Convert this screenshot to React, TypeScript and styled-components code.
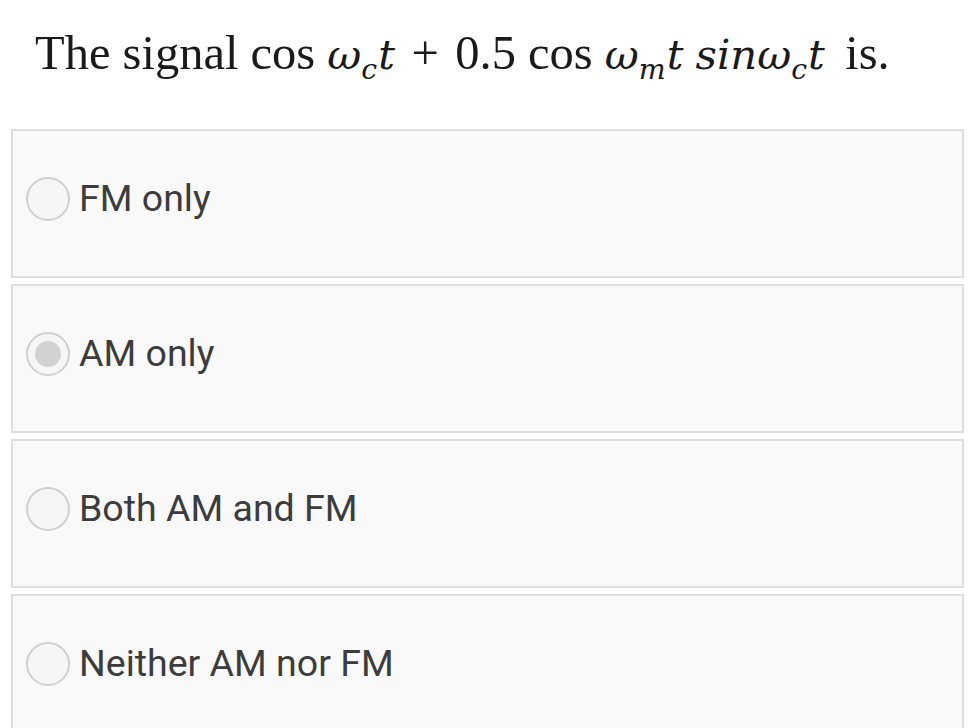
import React from "react";
import styled, { createGlobalStyle } from "styled-components";

const Global = createGlobalStyle`
  html, body { margin: 0; padding: 0; background: #ffffff; }
  body { font-family: "Roboto", "Liberation Sans", sans-serif; }
`;

const Page = styled.div`
  width: 971px;
  height: 728px;
  overflow: hidden;
  position: relative;
  background: #fff;
`;

const Question = styled.h1`
  margin: 0;
  padding: 24px 0 0 35px;
  height: 129px;
  box-sizing: border-box;
  font-family: "Liberation Serif", "Times New Roman", serif;
  font-weight: 400;
  font-size: 48.5px;
  line-height: 58px;
  color: #1a1a1a;
  white-space: nowrap;
`;

const MathVar = styled.i`
  font-family: "DejaVu Serif", "Liberation Serif", serif;
  font-style: italic;
  font-size: 0.86em;
`;

const MathOp = styled.span`
  margin: 0 0.34em;
`;

const Tail = styled.span`
  margin-left: 0.42em;
`;

const Sub = styled.sub`
  font-size: 0.68em;
  vertical-align: -0.3em;
  line-height: 0;
  margin-right: 0.03em;
`;

const Options = styled.div`
  display: flex;
  flex-direction: column;
  gap: 6px;
  padding: 0 7px 0 11px;
`;

const OptionBox = styled.label`
  display: flex;
  align-items: center;
  gap: 9px;
  height: 149px;
  box-sizing: border-box;
  padding: 0 0 10px 13px;
  border: 2px solid #dedede;
  background: #f9f9f9;
`;

const Radio = styled.span<{ $checked?: boolean }>`
  width: 44px;
  height: 44px;
  box-sizing: border-box;
  border-radius: 50%;
  border: 2px solid #cfcfcf;
  background: #f6f6f6;
  display: flex;
  align-items: center;
  justify-content: center;
  flex: none;
  &::after {
    content: "";
    display: ${(p) => (p.$checked ? "block" : "none")};
    width: 26px;
    height: 26px;
    border-radius: 50%;
    background: #d2d2d2;
  }
`;

const OptionText = styled.span`
  font-family: "Roboto", "Liberation Sans", sans-serif;
  font-size: 37.5px;
  color: #3c3c3c;
  line-height: 1;
`;

const options = [
  { label: "FM only", checked: false },
  { label: "AM only", checked: true },
  { label: "Both AM and FM", checked: false },
  { label: "Neither AM nor FM", checked: false },
];

export default function App() {
  return (
    <Page>
      <Global />
      <Question>
        The signal cos <MathVar>ω</MathVar>
        <Sub><MathVar>c</MathVar></Sub>
        <MathVar>t</MathVar>
        <MathOp>+</MathOp>0.5 cos <MathVar>ω</MathVar>
        <Sub><MathVar>m</MathVar></Sub>
        <MathVar>t</MathVar> <MathVar>sinω</MathVar>
        <Sub><MathVar>c</MathVar></Sub>
        <MathVar>t</MathVar>
        <Tail>is.</Tail>
      </Question>
      <Options>
        {options.map((o) => (
          <OptionBox key={o.label}>
            <Radio $checked={o.checked} />
            <OptionText>{o.label}</OptionText>
          </OptionBox>
        ))}
      </Options>
    </Page>
  );
}
